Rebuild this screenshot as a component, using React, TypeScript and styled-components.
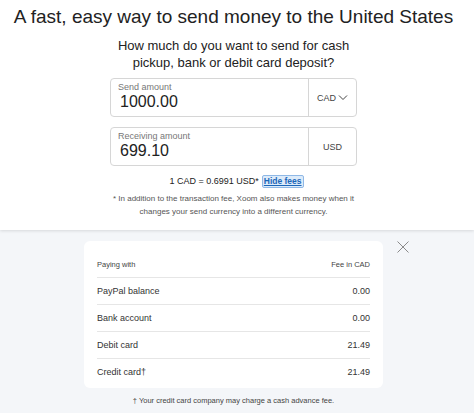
import styled, { createGlobalStyle } from "styled-components";

const GlobalStyle = createGlobalStyle`
  html, body {
    margin: 0;
    padding: 0;
    background: #f4f6f9;
    font-family: "Liberation Sans", Arial, sans-serif;
    color: #222222;
  }
`;

const fees = [
  { method: "PayPal balance", fee: "0.00" },
  { method: "Bank account", fee: "0.00" },
  { method: "Debit card", fee: "21.49" },
  { method: "Credit card†", fee: "21.49" },
];

const App = (): JSX.Element => {
  return (
    <Page>
      <GlobalStyle />
      <TopSection>
        <Title>A fast, easy way to send money to the United States</Title>
        <Question>
          How much do you want to send for cash
          <br />
          pickup, bank or debit card deposit?
        </Question>
        <AmountBox>
          <AmountField>
            <FieldLabel>Send amount</FieldLabel>
            <FieldValue>1000.00</FieldValue>
          </AmountField>
          <CurrencyCell>
            CAD
            <svg width="10" height="7" viewBox="0 0 10 7">
              <path d="M1 1.5 L5 5.5 L9 1.5" fill="none" stroke="#444" strokeWidth="1" />
            </svg>
          </CurrencyCell>
        </AmountBox>
        <AmountBox>
          <AmountField>
            <FieldLabel>Receiving amount</FieldLabel>
            <FieldValue>699.10</FieldValue>
          </AmountField>
          <CurrencyCell>USD</CurrencyCell>
        </AmountBox>
        <RateLine>
          1 CAD = 0.6991 USD*
          <HideFees>Hide fees</HideFees>
        </RateLine>
        <Disclaimer>
          * In addition to the transaction fee, Xoom also makes money when it
          <br />
          changes your send currency into a different currency.
        </Disclaimer>
      </TopSection>
      <FeeSection>
        <FeeCardWrap>
          <FeeCard>
            <FeeHeader>
              <span>Paying with</span>
              <span>Fee in CAD</span>
            </FeeHeader>
            {fees.map((f, i) => (
              <FeeRow key={f.method} $last={i === fees.length - 1}>
                <span>{f.method}</span>
                <span>{f.fee}</span>
              </FeeRow>
            ))}
          </FeeCard>
          <CloseButton>
            <svg width="12" height="12" viewBox="0 0 12 12">
              <path d="M0.5 0.5 L11.5 11.5 M11.5 0.5 L0.5 11.5" stroke="#8a8a8a" strokeWidth="1" />
            </svg>
          </CloseButton>
        </FeeCardWrap>
        <CardNote>† Your credit card company may charge a cash advance fee.</CardNote>
      </FeeSection>
    </Page>
  );
};

export default App;

const Page = styled.div`
  width: 474px;
  min-height: 413px;
`;

const TopSection = styled.div`
  background: #ffffff;
  height: 230px;
  box-sizing: border-box;
  padding: 5px 7px 0 0;
  display: flex;
  flex-direction: column;
  align-items: center;
  box-shadow: 0 1px 3px rgba(0, 0, 0, 0.12);
  position: relative;
  z-index: 1;
`;

const Title = styled.div`
  font-size: 19px;
  line-height: 24px;
  color: #222222;
  white-space: nowrap;
`;

const Question = styled.div`
  margin-top: 8px;
  font-size: 13px;
  line-height: 17px;
  text-align: center;
  color: #222222;
`;

const AmountBox = styled.div`
  margin-top: 7px;
  width: 247px;
  height: 39px;
  box-sizing: border-box;
  border: 1px solid #d6d6d6;
  border-radius: 4px;
  display: flex;

  & + & {
    margin-top: 10px;
  }
`;

const AmountField = styled.div`
  flex: 1;
  padding: 3px 0 0 7px;
  display: flex;
  flex-direction: column;
`;

const FieldLabel = styled.div`
  font-size: 9px;
  line-height: 10px;
  color: #777777;
`;

const FieldValue = styled.div`
  font-size: 16px;
  line-height: 20px;
  margin-left: 2px;
  color: #222222;
`;

const CurrencyCell = styled.div`
  width: 47px;
  border-left: 1px solid #d6d6d6;
  display: flex;
  align-items: center;
  justify-content: center;
  gap: 2px;
  font-size: 9px;
  color: #444444;
`;

const RateLine = styled.div`
  margin-top: 8px;
  margin-left: 6px;
  font-size: 9px;
  line-height: 14px;
  color: #222222;
  display: flex;
  align-items: center;
  gap: 3px;
`;

const HideFees = styled.span`
  background: #dcebfa;
  border: 1px solid #8fb8e6;
  border-radius: 2px;
  padding: 0 1px;
  color: #1b66b8;
  font-size: 8.5px;
  font-weight: bold;
  text-decoration: underline;
  line-height: 11px;
`;

const Disclaimer = styled.div`
  margin-top: 4px;
  font-size: 8px;
  line-height: 13px;
  text-align: center;
  color: #555555;
`;

const FeeSection = styled.div`
  display: flex;
  flex-direction: column;
  align-items: center;
  padding: 11px 7px 0 0;
`;

const FeeCardWrap = styled.div`
  position: relative;
`;

const FeeCard = styled.div`
  width: 299px;
  box-sizing: border-box;
  background: #ffffff;
  border-radius: 6px;
  padding: 19px 13px 3px 13px;
`;

const FeeHeader = styled.div`
  display: flex;
  justify-content: space-between;
  font-size: 7.5px;
  line-height: 10px;
  color: #444444;
  padding-bottom: 7px;
  border-bottom: 1px solid #e6e6e6;
`;

const FeeRow = styled.div<{ $last?: boolean }>`
  display: flex;
  justify-content: space-between;
  align-items: center;
  height: 26px;
  font-size: 9px;
  color: #333333;
  border-bottom: ${(p) => (p.$last ? "none" : "1px solid #e6e6e6")};
`;

const CloseButton = styled.div`
  position: absolute;
  top: 0;
  right: -26px;
  width: 12px;
  height: 12px;
  display: flex;
`;

const CardNote = styled.div`
  margin-top: 8px;
  font-size: 7.5px;
  color: #444444;
`;
